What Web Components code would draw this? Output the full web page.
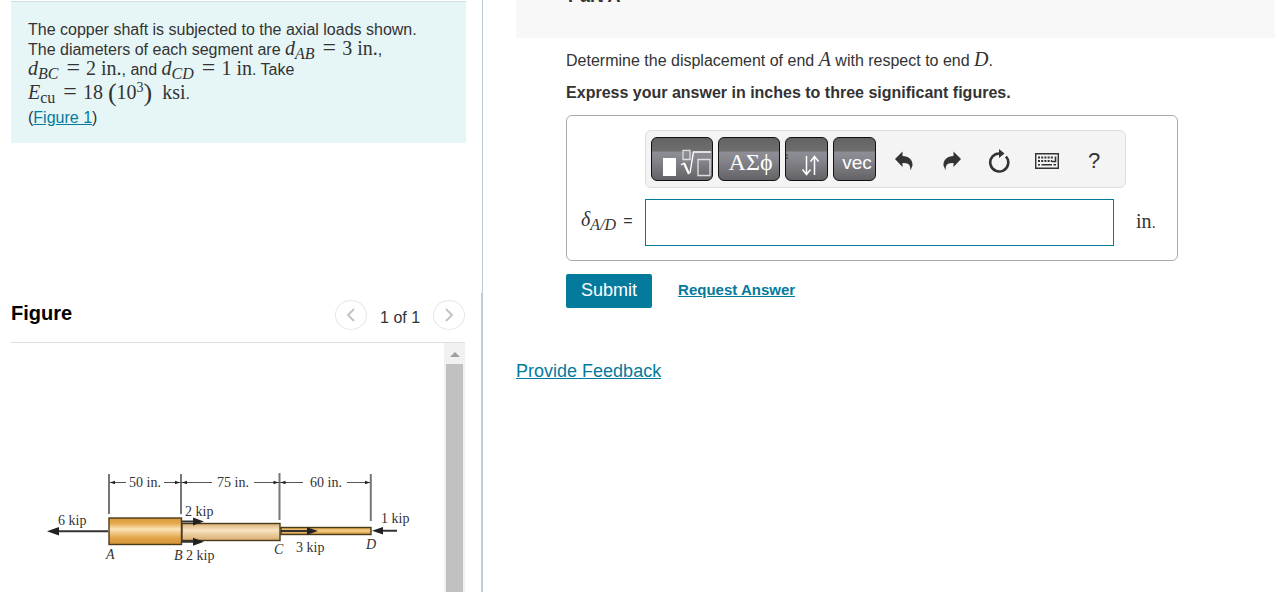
<!DOCTYPE html>
<html lang="en">
<head>
<meta charset="utf-8">
<title>Axial displacement</title>
<style>
  html, body { height: 100%; }
  body {
    margin: 0;
    overflow: hidden;
    background: #fff;
    color: #333;
    font: 16px/20px "Liberation Sans", Arial, sans-serif;
  }
</style>
</head>
<body>
<assignment-page>
  <problem-statement slot="problem">
    The copper shaft is subjected to the axial loads shown.<br>
    The diameters of each segment are <math-var name="d" sub="AB"></math-var><math-eq></math-eq><math-text>3 in.</math-text>,<br>
    <math-var name="d" sub="BC"></math-var><math-eq></math-eq><math-text>2 in.</math-text>, and <math-var name="d" sub="CD"></math-var><math-eq></math-eq><math-text>1 in</math-text>. Take<br>
    <math-var name="E" sub="cu" upright></math-var><math-eq></math-eq><math-text>18 <math-group base="10" power="3"></math-group>&nbsp; ksi</math-text>.
  </problem-statement>
  <figure-viewer slot="figure" heading="Figure" position="1 of 1">
    <shaft-diagram></shaft-diagram>
  </figure-viewer>
  <part-panel slot="part" heading="Part A">
    <span slot="question">Determine the displacement of end <math-var name="A"></math-var> with respect to end <math-var name="D"></math-var>.</span>
    <span slot="instruction">Express your answer in inches to three significant figures.</span>
    <answer-box></answer-box>
  </part-panel>
</assignment-page>

<script>
class BaseElement extends HTMLElement {
  constructor () {
    super()
    this.shadowDOM = this.attachShadow({ mode: 'open' })
  }

  connectedCallback () {
    this.render()
  }
}

class AssignmentPage extends BaseElement {
  render () {
    this.shadowDOM.innerHTML = `
      <style>
        :host {
          display: grid;
          grid-template-columns: 61fr 100fr;
          height: 100%;
        }
        .side {
          display: flex;
          flex-direction: column;
          min-width: 0;
          min-height: 0;
        }
        .problem {
          flex: 0 0 293px;
          box-sizing: border-box;
          padding: 1px 16px 0 11px;
          border-right: 1px solid #b9cbdf;
        }
        .figure {
          flex: 1;
          display: flex;
          min-height: 0;
          padding: 0 16px 0 11px;
          border-right: 2px solid #b9cbdf;
        }
        .figure ::slotted(*) { flex: 1; }
        main {
          min-width: 0;
          overflow: hidden;
          padding-left: 33px;
        }
      </style>
      <div class="side">
        <div class="problem"><slot name="problem"></slot></div>
        <div class="figure"><slot name="figure"></slot></div>
      </div>
      <main><slot name="part"></slot></main>
    `
  }
}
customElements.define('assignment-page', AssignmentPage)

// The inline math elements start with <style> so that no stray space is rendered.
class MathVar extends BaseElement {
  render () {
    const sub = this.getAttribute('sub')
    this.shadowDOM.innerHTML = `<style>
        :host {
          font-family: "Liberation Serif", "Times New Roman", serif;
          font-size: 20px;
          line-height: 0;
          white-space: nowrap;
        }
        sub {
          font-size: 16px;
          line-height: 0;
          vertical-align: -4px;
        }
        :host([upright]) sub { font-style: normal; }
      </style><i>${this.getAttribute('name')}${sub ? `<sub>${sub}</sub>` : ''}</i>`
  }
}
customElements.define('math-var', MathVar)

class MathText extends BaseElement {
  render () {
    this.shadowDOM.innerHTML = `<style>
        :host {
          font-family: "Liberation Serif", "Times New Roman", serif;
          font-size: 20px;
          line-height: 0;
          white-space: nowrap;
        }
      </style><slot></slot>`
  }
}
customElements.define('math-text', MathText)

class MathEq extends BaseElement {
  render () {
    this.shadowDOM.innerHTML = `<style>
        :host {
          margin: 0 6px 0 8px;
          font: 24px/0 "Liberation Serif", "Times New Roman", serif;
        }
      </style>=`
  }
}
customElements.define('math-eq', MathEq)

class MathGroup extends BaseElement {
  render () {
    this.shadowDOM.innerHTML = `<style>
        .paren { font-size: 26px; line-height: 25px; vertical-align: -2px; }
        sup { font-size: 14px; line-height: 0; vertical-align: 7px; }
      </style><span class="paren">(</span>${this.getAttribute('base')}<sup>${this.getAttribute('power')}</sup><span class="paren">)</span>`
  }
}
customElements.define('math-group', MathGroup)

class ProblemStatement extends BaseElement {
  render () {
    this.shadowDOM.innerHTML = `
      <style>
        :host {
          display: block;
          padding: 18px 16px 15px 17px;
          border-top: 1px solid #d5dedf;
          background: #e6f6f7;
        }
        a { color: #047a9c; }
        p { margin: 3px 0 0; }
      </style>
      <slot></slot>
      <p>(<a href="#figure">Figure 1</a>)</p>
    `
  }
}
customElements.define('problem-statement', ProblemStatement)

class FigureViewer extends BaseElement {
  render () {
    this.shadowDOM.innerHTML = `
      <style>
        :host {
          display: flex;
          flex-direction: column;
          min-width: 0;
        }
        header {
          display: flex;
          align-items: center;
          justify-content: space-between;
          padding: 7px 0 12px;
          border-bottom: 1px solid #ddd;
        }
        h2 {
          margin: 0 0 5px;
          color: #000;
          font-size: 20px;
          line-height: 24px;
        }
        nav {
          display: flex;
          align-items: center;
          gap: 13px;
        }
        nav span { padding-top: 5px; }
        nav button {
          display: grid;
          place-items: center;
          width: 32px;
          height: 30px;
          padding: 0;
          border: 1px solid #e6e6e6;
          border-radius: 50%;
          background: #fff;
        }
        nav svg {
          fill: none;
          stroke: #c4c4c4;
          stroke-width: 2;
        }
        .scroller {
          flex: 1;
          display: flex;
          min-height: 0;
          overflow: hidden;
        }
        .content { flex: 1; min-width: 0; }
        .scrollbar {
          display: flex;
          flex-direction: column;
          width: 21px;
          background: #f1f1f1;
        }
        .up {
          display: block;
          margin: 9px auto 7px;
          fill: #a0a0a0;
        }
        .thumb {
          flex: 1;
          margin: 0 2px;
          background: #c1c1c1;
        }
      </style>
      <header>
        <h2 id="figure">${this.getAttribute('heading')}</h2>
        <nav>
          <button type="button" aria-label="Previous figure">
            <svg width="10" height="14" viewBox="0 0 10 14"><path d="M8 1L2 7l6 6"/></svg>
          </button>
          <span>${this.getAttribute('position')}</span>
          <button type="button" aria-label="Next figure">
            <svg width="10" height="14" viewBox="0 0 10 14"><path d="M2 1l6 6-6 6"/></svg>
          </button>
        </nav>
      </header>
      <div class="scroller">
        <div class="content"><slot></slot></div>
        <div class="scrollbar">
          <svg class="up" width="10" height="5" viewBox="0 0 10 5"><path d="M0 5L5 0l5 5z"/></svg>
          <div class="thumb"></div>
        </div>
      </div>
    `
  }
}
customElements.define('figure-viewer', FigureViewer)

class ShaftDiagram extends BaseElement {
  render () {
    this.shadowDOM.innerHTML = `
      <style>
        :host { display: block; padding: 117px 0 0 29px; }
        svg { display: block; }
        text {
          fill: #333;
          font: 14px "Liberation Serif", "Times New Roman", serif;
        }
        .point { font-style: italic; }
        .dim { stroke: #777; stroke-width: 2; }
        .dim-line { stroke: #555; stroke-width: 1; }
        .force { stroke: #333; stroke-width: 2; }
        .head { fill: #222; }
        .bar { stroke: #4a3a1c; stroke-width: 1.4; }
      </style>
      <svg width="390" height="120" viewBox="40 460 390 120" role="img" aria-label="Stepped shaft with axial loads">
        <defs>
          <linearGradient id="ab" x2="0" y2="1">
            <stop offset="0" stop-color="#d99a3c"/>
            <stop offset=".2" stop-color="#e5a94d"/>
            <stop offset=".42" stop-color="#fbe3b8"/>
            <stop offset=".75" stop-color="#e3a548"/>
            <stop offset="1" stop-color="#d39236"/>
          </linearGradient>
          <linearGradient id="bc" x2="0" y2="1">
            <stop offset="0" stop-color="#d9b075"/>
            <stop offset=".4" stop-color="#f8e4c2"/>
            <stop offset="1" stop-color="#d8ab6b"/>
          </linearGradient>
          <linearGradient id="cd" x2="0" y2="1">
            <stop offset="0" stop-color="#d99b3d"/>
            <stop offset=".45" stop-color="#f6cf88"/>
            <stop offset="1" stop-color="#cf8f35"/>
          </linearGradient>
        </defs>

        <!-- dimension lines -->
        <path class="dim" d="M109 474V514M181 474V514M279.500 473V520M370.800 474V521"/>
        <path class="dim-line" d="M110 482.500H126M164 482.500H212M254 482.500H303M347 482.500H370"/>
        <path class="head" d="M110 482.500l5-1.800v3.600zM180 482.500l-5-1.800v3.600zM182 482.500l5-1.800v3.600zM278.500 482.500l-5-1.800v3.600zM280.500 482.500l5-1.800v3.600zM370 482.500l-5-1.800v3.600z"/>
        <text x="129" y="487">50 in.</text>
        <text x="217" y="487">75 in.</text>
        <text x="310" y="487">60 in.</text>

        <!-- shaft segments -->
        <rect class="bar" x="109" y="518" width="72.500" height="26.500" fill="url(#ab)"/>
        <rect class="bar" x="182" y="523.500" width="98" height="17" fill="url(#bc)"/>
        <rect class="bar" x="281" y="527.500" width="90" height="7" fill="url(#cd)"/>

        <!-- loads -->
        <path class="force" d="M108 531.300H58M182 521.500H195M182 541.800H195M281 531H308M397 530.800H382"/>
        <path class="head" d="M47 531.300l12-4.300v8.600zM204 521.500l-11-4v8zM204 541.800l-11-4v8zM318 531l-11-3.800v7.600zM372 530.800l11-3.800v7.600z"/>
        <text x="58" y="525">6 kip</text>
        <text x="185" y="516">2 kip</text>
        <text x="186" y="560">2 kip</text>
        <text x="296" y="552">3 kip</text>
        <text x="381" y="523">1 kip</text>
        <text class="point" x="106" y="559">A</text>
        <text class="point" x="174" y="560">B</text>
        <text class="point" x="274" y="554">C</text>
        <text class="point" x="366" y="549">D</text>
      </svg>
    `
  }
}
customElements.define('shaft-diagram', ShaftDiagram)

class PartPanel extends BaseElement {
  render () {
    this.shadowDOM.innerHTML = `
      <style>
        :host { display: block; }
        /* the header is partly scrolled off the top */
        header {
          margin-top: -34px;
          padding: 20px 52px 32px;
          background: #f8f8f8;
        }
        h1 {
          margin: 0;
          font-size: 18px;
          line-height: 20px;
        }
        .body { padding: 13px 97px 0 50px; }
        p { margin: 0 0 12px; }
        .instruction { font-weight: bold; }
        .actions {
          display: flex;
          align-items: center;
          gap: 26px;
          margin-top: 13px;
        }
        .actions button {
          height: 34px;
          padding: 0 15px 2px;
          border: 0;
          border-radius: 2px;
          background: #047a9c;
          color: #fff;
          font: 18px/20px "Liberation Sans", Arial, sans-serif;
        }
        a { color: #047a9c; }
        .actions a { padding-bottom: 2px; font-size: 15px; font-weight: bold; }
        .feedback {
          display: inline-block;
          margin-top: 53px;
          font-size: 18px;
        }
      </style>
      <header><h1>${this.getAttribute('heading')}</h1></header>
      <div class="body">
        <p><slot name="question"></slot></p>
        <p class="instruction"><slot name="instruction"></slot></p>
        <slot></slot>
        <div class="actions">
          <button type="submit">Submit</button>
          <a href="#request">Request Answer</a>
        </div>
      </div>
      <a class="feedback" href="#feedback">Provide Feedback</a>
    `
  }
}
customElements.define('part-panel', PartPanel)

class EquationToolbar extends BaseElement {
  render () {
    this.shadowDOM.innerHTML = `
      <style>
        :host {
          display: flex;
          align-items: center;
          gap: 5px;
          box-sizing: border-box;
          height: 58px;
          padding: 0 5px;
          border: 1px solid #ddd;
          border-radius: 6px;
          background: #f4f4f4;
        }
        button {
          display: grid;
          place-items: center;
          box-sizing: border-box;
          padding: 0;
          border: 0;
          background: none;
          color: #333;
          font: 22px/24px "Liberation Sans", Arial, sans-serif;
        }
        .dark {
          flex: none;
          width: 43px;
          height: 44px;
          overflow: hidden;
          border: 1px solid #111;
          border-radius: 6px;
          background: linear-gradient(#636363 0, #6e6e6e 13px, #8e8e97 14px, #85858c 22px, #626266 100%);
          color: #fff;
        }
        .wide { width: 62px; }
        .greek {
          padding: 6px 0 0 3px;
          font-family: "Liberation Serif", "Times New Roman", serif;
          font-size: 24px;
        }
        .vec { padding: 8px 0 0 5px; font-size: 19px; }
        .icons {
          flex: 1;
          display: flex;
          justify-content: space-between;
          padding: 3px 12px 0 9px;
        }
        .icons button { width: 28px; height: 28px; }
        svg { display: block; }
      </style>
      <button class="dark wide" type="button" aria-label="Templates">
        <svg width="60" height="42" viewBox="0 0 60 42" fill="none" stroke="#fff">
          <path fill="#fff" stroke="none" d="M11 20h13v18H11z"/>
          <path stroke="#ddd" stroke-width="1.300" d="M31 12.500h7v9h-7z"/>
          <path stroke-width="1.400" d="M38 35L41.500 14H59"/>
          <path stroke-width="1.400" d="M29 27l3-2"/>
          <path stroke-width="2.200" d="M32 25l5 11"/>
          <path stroke="#ddd" stroke-width="1.400" d="M46 21.500h12v16H46z"/>
        </svg>
      </button>
      <button class="dark wide greek" type="button">ΑΣϕ</button>
      <button class="dark" type="button" aria-label="Arrows">
        <svg width="41" height="42" viewBox="0 0 41 42" fill="none" stroke="#fff" stroke-width="1.500">
          <path d="M20.500 18v18M16.500 31.500l4 5 4-5M28.500 37V19M24.500 23.500l4-5 4 5"/>
          <path stroke="#333" stroke-width="1" d="M0 17h2M0 20h2"/>
        </svg>
      </button>
      <button class="dark vec" type="button">vec</button>
      <div class="icons">
        <button type="button" aria-label="Undo">
          <svg width="20" height="22" viewBox="0 0 20 22"><path fill="#333" d="M1 9L8.500 1.500v4.500c6 0 10.500 4 10 9.500l-2 5c0-5-1-8-8-7.500V17z"/></svg>
        </button>
        <button type="button" aria-label="Redo">
          <svg width="20" height="22" viewBox="0 0 20 22"><path fill="#333" d="M19 9l-7.500-7.500v4.500c-6 0-10.500 4-10 9.500l2 5c0-5 1-8 8-7.500V17z"/></svg>
        </button>
        <button type="button" aria-label="Reset">
          <svg width="22" height="24" viewBox="0 0 22 24">
            <path fill="none" stroke="#333" stroke-width="2.600" d="M12 4.500a9 9 0 1 0 6 3"/>
            <path fill="#333" d="M11 0l5.500 4.500L11 9z"/>
          </svg>
        </button>
        <button type="button" aria-label="Keyboard">
          <svg width="24" height="16" viewBox="0 0 24 16">
            <path fill="none" stroke="#333" stroke-width="1.400" d="M.7.700h22.600v14.600H.700z"/>
            <path stroke="#333" stroke-width="2" stroke-dasharray="2 1.200" d="M3 4.500h15M3 8h14"/>
            <path fill="none" stroke="#333" stroke-width="1.600" d="M20.500 3.500v5H17M3 11.700h2M6.500 11.700H17M18.500 11.700h2.500"/>
          </svg>
        </button>
        <button type="button" aria-label="Help">?</button>
      </div>
    `
  }
}
customElements.define('equation-toolbar', EquationToolbar)

class AnswerBox extends BaseElement {
  render () {
    this.shadowDOM.innerHTML = `
      <style>
        :host {
          display: grid;
          grid-template-columns: 64px 1fr 63px;
          row-gap: 11px;
          padding: 14px 0 14px 14px;
          border: 1px solid #aaa;
          border-radius: 6px;
        }
        equation-toolbar { grid-column: 2 / 4; margin-right: 51px; }
        label {
          display: flex;
          align-items: baseline;
          align-self: center;
          gap: 7px;
          padding-bottom: 4px;
        }
        input {
          box-sizing: border-box;
          width: 100%;
          height: 47px;
          border: 1px solid #047a9c;
          border-radius: 0;
          background: #fff;
          font: inherit;
        }
        .unit { align-self: center; padding-left: 22px; }
      </style>
      <equation-toolbar></equation-toolbar>
      <label for="answer"><math-var name="δ" sub="A/D"></math-var><span>=</span></label>
      <input id="answer" type="text">
      <span class="unit"><math-text>in</math-text>.</span>
    `
  }
}
customElements.define('answer-box', AnswerBox)
</script>
</body>
</html>
